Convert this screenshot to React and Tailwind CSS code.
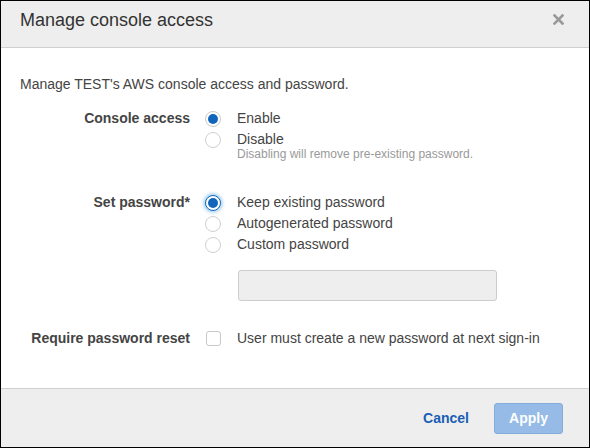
const font = { fontFamily: '"Liberation Sans", Arial, sans-serif' };

const Radio = ({ checked, focused }) => (
  <span
    className={
      'relative flex h-[16px] w-[16px] shrink-0 items-center justify-center rounded-full border bg-white ' +
      (focused
        ? 'border-[#1166bb] shadow-[0_0_3px_2px_rgba(102,175,233,0.5)]'
        : checked
          ? 'border-[#c8c8c8]'
          : 'border-[#d0d0d0]')
    }
  >
    {checked && <span className="h-[10px] w-[10px] rounded-full bg-[#1166bb]" />}
  </span>
);

const Option = ({ label, checked, focused, children }) => (
  <div>
    <div className="flex h-[21px] items-center">
      <Radio checked={checked} focused={focused} />
      <span className="ml-[16px] text-[14px] text-[#444]">{label}</span>
    </div>
    {children}
  </div>
);

export default function App() {
  return (
    <div
      style={font}
      className="flex h-[448px] w-[590px] flex-col border border-black bg-white text-[#444]"
    >
      {/* Header */}
      <div className="flex h-[47px] shrink-0 items-start justify-between border-b border-[#cfcfcf] bg-[#eeeeee] pl-[19px] pr-[25px] pt-[7px]">
        <h1 className="text-[18px] leading-[24px] text-[#333]">Manage console access</h1>
        <button className="mt-[6px] text-[#999]">
          <svg width="11" height="11" viewBox="0 0 11 11">
            <path d="M1.5 1.5l8 8M9.5 1.5l-8 8" stroke="currentColor" strokeWidth="2.6" strokeLinecap="square" />
          </svg>
        </button>
      </div>

      {/* Body */}
      <div className="flex-1 px-[19px] pt-[26px]">
        <p className="text-[14px] leading-[20px] text-[#444]">
          Manage TEST's AWS console access and password.
        </p>

        <div className="mt-[14px] flex">
          <div className="flex h-[21px] w-[170px] items-center justify-end text-[14px] font-bold">
            Console access
          </div>
          <div className="ml-[15px]">
            <Option label="Enable" checked />
            <Option label="Disable">
              <p className="-mt-[2px] ml-[32px] text-[12px] leading-[12px] text-[#999]">
                Disabling will remove pre-existing password.
              </p>
            </Option>
          </div>
        </div>

        <div className="mt-[32px] flex">
          <div className="flex h-[21px] w-[170px] items-center justify-end text-[14px] font-bold">
            Set password*
          </div>
          <div className="ml-[15px]">
            <Option label="Keep existing password" checked focused />
            <Option label="Autogenerated password" />
            <Option label="Custom password" />
            <input
              disabled
              className="ml-[33px] mt-[15px] block h-[31px] w-[259px] rounded-[3px] border border-[#cccccc] bg-[#eeeeee]"
            />
          </div>
        </div>

        <div className="mt-[27px] flex">
          <div className="flex h-[21px] w-[170px] items-center justify-end text-[14px] font-bold">
            Require password reset
          </div>
          <div className="ml-[16px] flex h-[21px] items-center">
            <span className="h-[15px] w-[15px] rounded-[3px] border border-[#c8c8c8] bg-white" />
            <span className="ml-[16px] text-[14px]">User must create a new password at next sign-in</span>
          </div>
        </div>
      </div>

      {/* Footer */}
      <div className="flex h-[59px] shrink-0 items-center justify-end gap-[25px] border-t border-[#cfcfcf] bg-[#eeeeee] pr-[26px]">
        <button className="text-[14px] font-bold text-[#1a5fb4]">Cancel</button>
        <button
          disabled
          className="h-[31px] w-[69px] rounded-[3px] border border-[#86acdb] bg-[#95bbe6] text-[14px] font-bold text-white"
        >
          Apply
        </button>
      </div>
    </div>
  );
}
